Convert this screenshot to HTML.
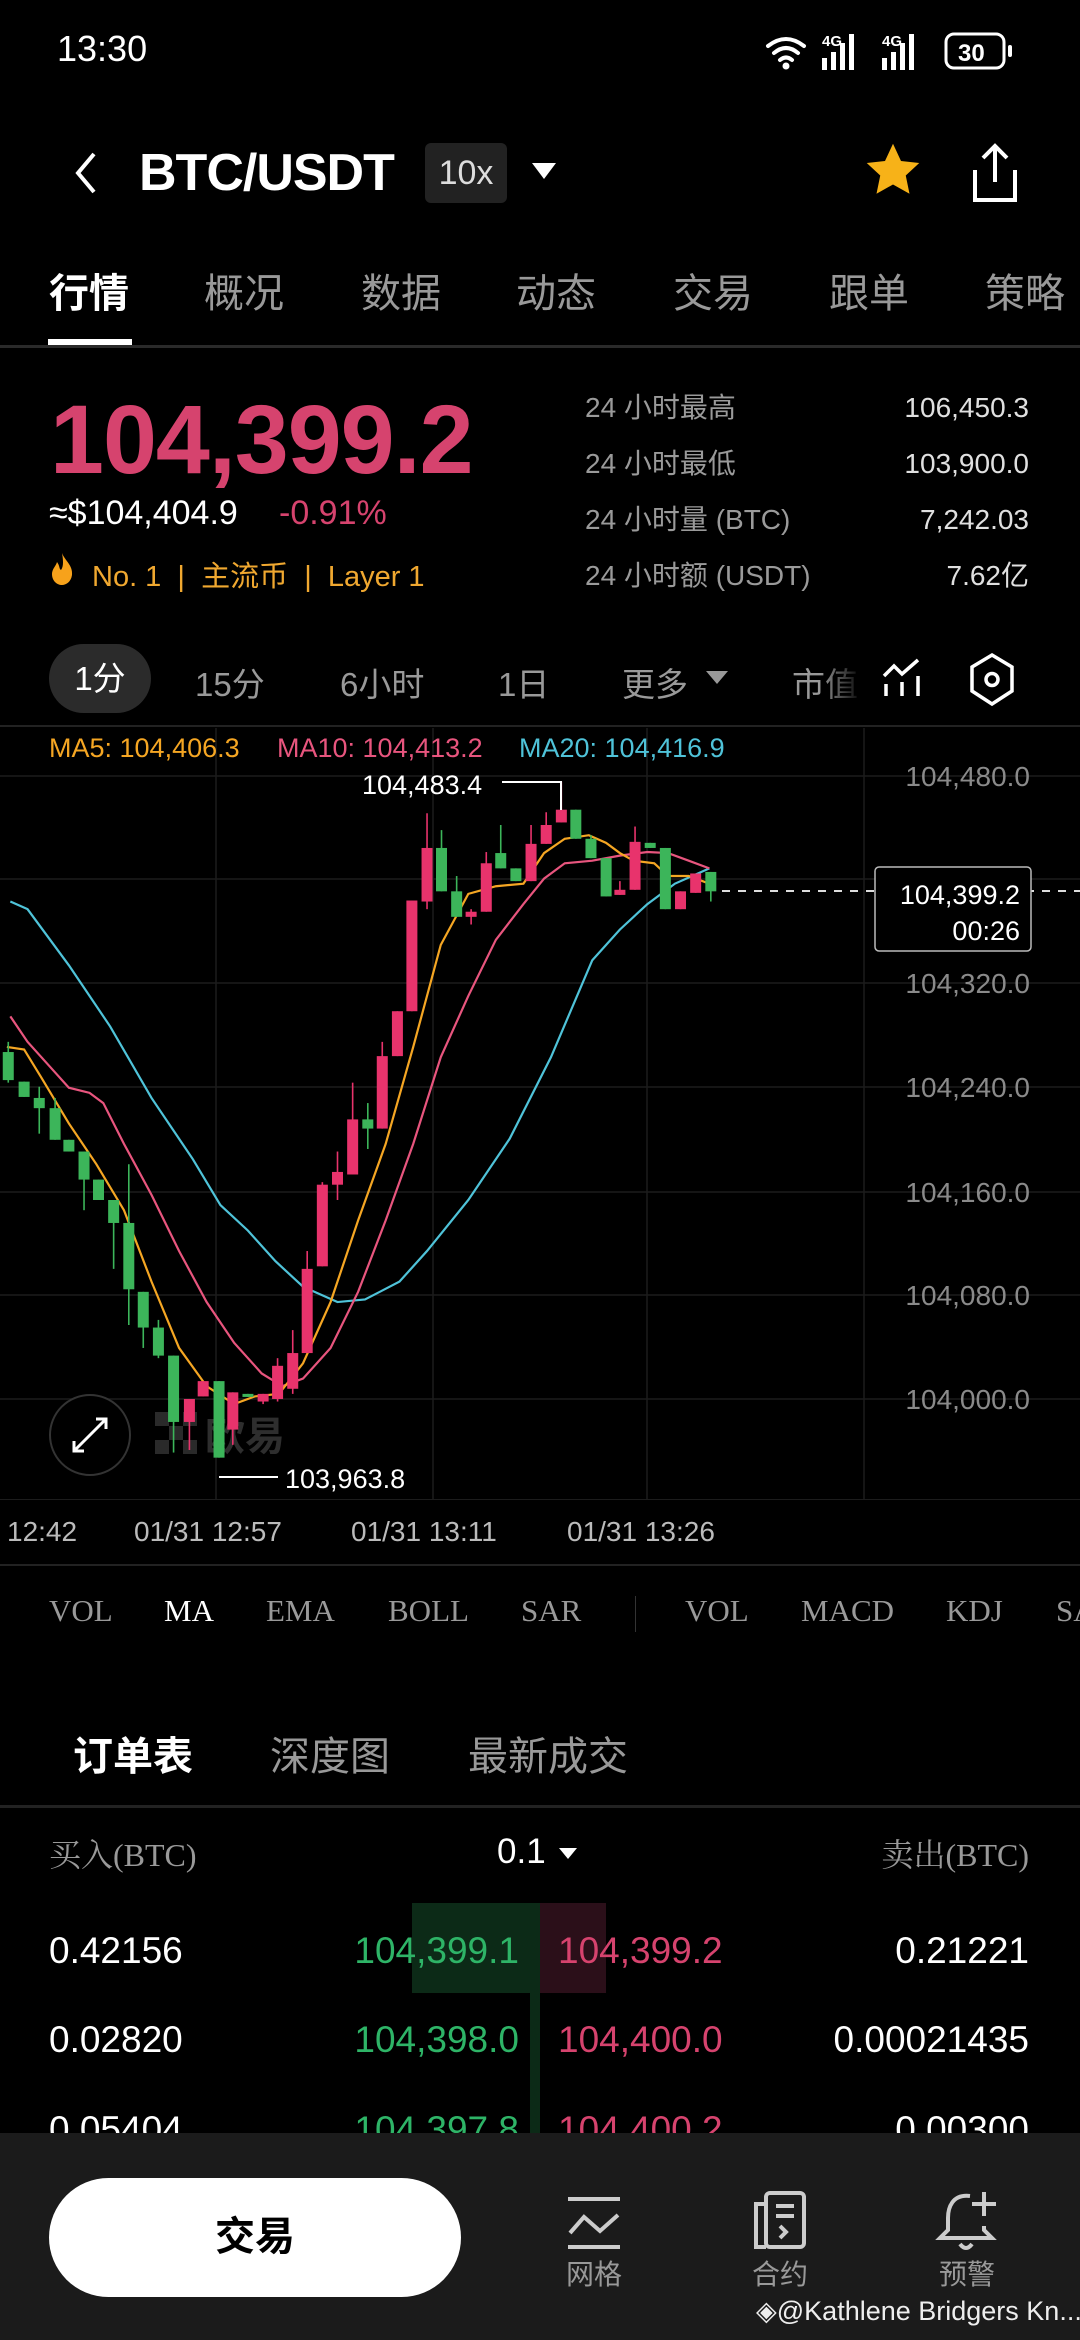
<!DOCTYPE html>
<html><head><meta charset="utf-8">
<style>
*{margin:0;padding:0;box-sizing:border-box}
body{width:1080px;height:2340px;background:#000;color:#fff;font-family:"Liberation Sans","Noto Sans CJK SC",sans-serif;position:relative;overflow:hidden}
.a{position:absolute;white-space:nowrap}
.serif{font-family:"Liberation Serif","Noto Serif CJK SC",serif}
</style></head><body>

<!-- status bar -->
<div class="a" style="left:57px;top:28px;font-size:36px;color:#fff">13:30</div>
<svg class="a" style="left:760px;top:30px" width="270" height="44" viewBox="0 0 270 44">
 <g fill="none" stroke="#fff" stroke-width="4" stroke-linecap="round">
  <path d="M8 16 Q26 2 44 16"/><path d="M14 23 Q26 13 38 23"/><path d="M20 30 Q26 25 32 30"/>
 </g>
 <circle cx="26" cy="36" r="3.5" fill="#fff"/>
 <text x="62" y="16" font-size="15" font-weight="bold" fill="#fff" font-family="Liberation Sans">4G</text>
 <g fill="#fff"><rect x="62" y="28" width="5" height="12"/><rect x="71" y="22" width="5" height="18"/><rect x="80" y="13" width="5" height="27"/><rect x="89" y="4" width="5" height="36"/></g>
 <text x="122" y="16" font-size="15" font-weight="bold" fill="#fff" font-family="Liberation Sans">4G</text>
 <g fill="#fff"><rect x="122" y="28" width="5" height="12"/><rect x="131" y="22" width="5" height="18"/><rect x="140" y="13" width="5" height="27"/><rect x="149" y="4" width="5" height="36"/></g>
 <rect x="186" y="4" width="58" height="34" rx="8" fill="none" stroke="#fff" stroke-width="3"/>
 <rect x="248" y="15" width="4" height="12" rx="2" fill="#fff"/>
 <text x="198" y="31" font-size="24" font-weight="bold" fill="#fff" font-family="Liberation Sans">30</text>
</svg>

<!-- header -->
<svg class="a" style="left:70px;top:150px" width="30" height="46"><path d="M24 4 L8 23 L24 42" fill="none" stroke="#fff" stroke-width="4"/></svg>
<div class="a" style="left:139px;top:143px;font-size:52px;font-weight:bold;letter-spacing:-1px">BTC/USDT</div>
<div class="a" style="left:425px;top:143px;width:82px;height:60px;background:#222;border-radius:6px;font-size:34px;color:#ddd;text-align:center;line-height:60px">10x</div>
<svg class="a" style="left:532px;top:163px" width="24" height="18"><path d="M0 0 L24 0 L12 16Z" fill="#fff"/></svg>
<svg class="a" style="left:862px;top:140px" width="62" height="60" viewBox="0 0 24 24"><path d="M12 1.5l3.2 6.9 7.3.8-5.4 5 1.5 7.3L12 17.8 5.4 21.5l1.5-7.3-5.4-5 7.3-.8z" fill="#f7b218"/></svg>
<svg class="a" style="left:965px;top:142px" width="60" height="62" viewBox="0 0 60 62"><g fill="none" stroke="#fff" stroke-width="4"><path d="M30 4 V40"/><path d="M18 16 L30 4 L42 16"/><path d="M10 28 V58 H50 V28"/></g></svg>

<!-- tabs -->
<div class="a" style="left:49px;top:261px;font-size:40px;color:#fff;font-weight:bold">行情</div>
<div class="a" style="left:204px;top:261px;font-size:40px;color:#999">概况</div>
<div class="a" style="left:361px;top:261px;font-size:40px;color:#999">数据</div>
<div class="a" style="left:516px;top:261px;font-size:40px;color:#999">动态</div>
<div class="a" style="left:673px;top:261px;font-size:40px;color:#999">交易</div>
<div class="a" style="left:829px;top:261px;font-size:40px;color:#999">跟单</div>
<div class="a" style="left:985px;top:261px;font-size:40px;color:#999">策略</div>
<div class="a" style="left:48px;top:339px;width:84px;height:6px;background:#fff"></div>
<div class="a" style="left:0;top:345px;width:1080px;height:3px;background:#2a2a2a"></div>

<!-- price -->
<div class="a" style="left:50px;top:384px;font-size:97px;font-weight:bold;color:#d6436e;letter-spacing:-1px">104,399.2</div>
<div class="a" style="left:49px;top:494px;font-size:34px;color:#fff">≈$104,404.9</div>
<div class="a" style="left:279px;top:494px;font-size:34px;color:#d6436e">-0.91%</div>
<svg class="a" style="left:51px;top:553px" width="22" height="32" viewBox="0 0 22 32"><path d="M11 0 C14 8 22 12 21 22 C20 29 15 32 11 32 C6 32 1 28 1 21 C1 16 5 13 6 9 C9 13 8 16 10 17 C13 13 12 6 11 0Z" fill="#f7a21b"/></svg>
<div class="a" style="left:92px;top:553px;font-size:29px;color:#f0a830">No. 1 &nbsp;|&nbsp; 主流币 &nbsp;|&nbsp; Layer 1</div>

<div class="a" style="left:585px;top:380px;font-size:28px;color:#9a9a9a;line-height:56px">24 小时最高<br>24 小时最低<br>24 小时量 (BTC)<br>24 小时额 (USDT)</div>
<div class="a" style="right:51px;top:380px;font-size:28px;color:#e0e0e0;line-height:56px;text-align:right">106,450.3<br>103,900.0<br>7,242.03<br>7.62亿</div>

<!-- interval row -->
<div class="a" style="left:49px;top:644px;width:102px;height:69px;background:#2b2b2b;border-radius:35px;font-size:33px;line-height:69px;text-align:center;color:#fff">1分</div>
<div class="a" style="left:195px;top:658px;font-size:33px;color:#999">15分</div>
<div class="a" style="left:340px;top:658px;font-size:33px;color:#999">6小时</div>
<div class="a" style="left:498px;top:658px;font-size:33px;color:#999">1日</div>
<div class="a" style="left:622px;top:658px;font-size:33px;color:#999">更多</div>
<svg class="a" style="left:706px;top:671px" width="22" height="14"><path d="M0 0H22L11 13Z" fill="#999"/></svg>
<div class="a" style="left:792px;top:658px;font-size:33px;color:#999">市值</div>
<div class="a" style="left:820px;top:640px;width:60px;height:80px;background:linear-gradient(90deg,rgba(0,0,0,0),#000 70%)"></div>
<svg class="a" style="left:880px;top:654px" width="50" height="50" viewBox="0 0 50 50"><g fill="none" stroke="#fff" stroke-width="3.5"><path d="M4 22 L14 12 L22 20 L38 6"/><path d="M6 30V42M22 28V42M38 22V42"/></g></svg>
<svg class="a" style="left:966px;top:652px" width="52" height="56" viewBox="0 0 52 56"><path d="M26 3 L46 15 V39 L26 52 L6 39 V15Z" fill="none" stroke="#fff" stroke-width="3.5"/><circle cx="26" cy="27.5" r="6" fill="none" stroke="#fff" stroke-width="3.5"/></svg>
<div class="a" style="left:0;top:725px;width:1080px;height:2px;background:#222"></div>

<!-- chart -->
<svg class="a" style="left:0;top:700px" width="1080" height="800" viewBox="0 0 1080 800">
 <g stroke="#1c1c1c" stroke-width="1.5">
  <line x1="0" y1="76" x2="1080" y2="76"/><line x1="0" y1="179" x2="1080" y2="179"/><line x1="0" y1="283" x2="1080" y2="283"/>
  <line x1="0" y1="387" x2="1080" y2="387"/><line x1="0" y1="492" x2="1080" y2="492"/><line x1="0" y1="595" x2="1080" y2="595"/><line x1="0" y1="699" x2="1080" y2="699"/>
  <line x1="216" y1="28" x2="216" y2="800"/><line x1="433" y1="28" x2="433" y2="800"/><line x1="647" y1="28" x2="647" y2="800"/><line x1="864" y1="28" x2="864" y2="800"/>
 </g>
 <g font-size="28" fill="#8a8a8a" font-family="Liberation Sans" text-anchor="end">
  <text x="1030" y="86">104,480.0</text><text x="1030" y="189" fill="#333">104,400.0</text><text x="1030" y="293">104,320.0</text>
  <text x="1030" y="397">104,240.0</text><text x="1030" y="502">104,160.0</text><text x="1030" y="605">104,080.0</text><text x="1030" y="709">104,000.0</text>
 </g>
 <g font-size="27" font-family="Liberation Sans">
  <text x="49" y="57" fill="#f5a623">MA5: 104,406.3</text>
  <text x="277" y="57" fill="#e8557e">MA10: 104,413.2</text>
  <text x="519" y="57" fill="#4fc3d9">MA20: 104,416.9</text>
 </g>
 <g fill="#2a2a2a"><rect x="155" y="712" width="14" height="14"/><rect x="183" y="712" width="14" height="14"/><rect x="169" y="726" width="14" height="14"/><rect x="155" y="740" width="14" height="14"/><rect x="183" y="740" width="14" height="14"/></g>
 <text x="205" y="750" font-size="40" fill="#2e2e2e" font-weight="bold" font-family="Noto Sans CJK SC">欧易</text>
 <circle cx="90" cy="735" r="40" fill="#000" stroke="#333" stroke-width="2"/>
 <g fill="none" stroke="#fff" stroke-width="3"><path d="M74 751 L106 719 M96 719H106V729 M74 741V751H84"/></g>

 <g transform="scale(0.68871,0.5102)" fill="none" stroke-width="2.2">
  <polyline vector-effect="non-scaling-stroke" stroke="#4fc3d9" points="15,395 40,410 100,520 160,640 220,780 280,900 320,990 360,1040 400,1100 440,1150 490,1180 530,1175 580,1140 620,1080 680,980 740,860 800,700 860,510 900,450 940,400 980,360 1030,330"/>
  <polyline vector-effect="non-scaling-stroke" stroke="#e8557e" points="15,620 40,670 80,730 100,760 130,770 150,790 180,870 220,970 260,1080 300,1180 340,1260 380,1320 410,1345 440,1330 480,1270 520,1160 560,1020 600,870 640,700 680,580 720,470 760,400 790,350 820,320 860,315 900,305 940,298 970,300 1000,315 1030,330"/>
  <polyline vector-effect="non-scaling-stroke" stroke="#f5a623" points="10,680 35,685 60,740 100,830 140,910 180,1000 220,1140 260,1270 300,1345 340,1380 370,1365 405,1360 440,1300 480,1180 520,1020 560,870 600,680 640,480 680,380 720,365 760,360 790,300 820,272 855,265 880,280 900,300 920,315 950,320 970,345 1000,345 1030,360"/>
 </g>
 <g id="candles"></g>
 <text x="362" y="94" font-size="27" fill="#fff" font-family="Liberation Sans">104,483.4</text>
 <path d="M502 82 H561 V110" stroke="#fff" stroke-width="2" fill="none"/>
 <path d="M219 777 H278" stroke="#fff" stroke-width="2"/>
 <text x="285" y="788" font-size="27" fill="#fff" font-family="Liberation Sans">103,963.8</text>
 <line x1="722" y1="191" x2="1080" y2="191" stroke="#ddd" stroke-width="2" stroke-dasharray="8,8"/>
 <rect x="875" y="167" width="156" height="84" rx="4" fill="#000" stroke="#bbb" stroke-width="1.5"/>
 <text x="1020" y="204" font-size="27" fill="#fff" text-anchor="end" font-family="Liberation Sans">104,399.2</text>
 <text x="1020" y="240" font-size="27" fill="#fff" text-anchor="end" font-family="Liberation Sans">00:26</text>
</svg>

<div class="a" style="left:0;top:1499px;width:1080px;height:1px;background:#1c1c1c"></div>
<div class="a" style="left:7px;top:1516px;font-size:28px;color:#bbb">12:42</div>
<div class="a" style="left:134px;top:1516px;font-size:28px;color:#bbb">01/31 12:57</div>
<div class="a" style="left:351px;top:1516px;font-size:28px;color:#bbb">01/31 13:11</div>
<div class="a" style="left:567px;top:1516px;font-size:28px;color:#bbb">01/31 13:26</div>
<div class="a" style="left:0;top:1564px;width:1080px;height:2px;background:#222"></div>

<!-- indicators -->
<div class="a serif" style="left:49px;top:1593px;font-size:31px;color:#999">VOL</div>
<div class="a serif" style="left:164px;top:1593px;font-size:31px;color:#fff">MA</div>
<div class="a serif" style="left:266px;top:1593px;font-size:31px;color:#999">EMA</div>
<div class="a serif" style="left:388px;top:1593px;font-size:31px;color:#999">BOLL</div>
<div class="a serif" style="left:521px;top:1593px;font-size:31px;color:#999">SAR</div>
<div class="a" style="left:635px;top:1596px;width:1px;height:36px;background:#333"></div>
<div class="a serif" style="left:685px;top:1593px;font-size:31px;color:#999">VOL</div>
<div class="a serif" style="left:801px;top:1593px;font-size:31px;color:#999">MACD</div>
<div class="a serif" style="left:946px;top:1593px;font-size:31px;color:#999">KDJ</div>
<div class="a serif" style="left:1056px;top:1593px;font-size:31px;color:#999">SAR</div>

<!-- order book tabs -->
<div class="a" style="left:73px;top:1724px;font-size:40px;color:#fff;font-weight:bold">订单表</div>
<div class="a" style="left:270px;top:1724px;font-size:40px;color:#999">深度图</div>
<div class="a" style="left:468px;top:1724px;font-size:40px;color:#999">最新成交</div>
<div class="a" style="left:0;top:1805px;width:1080px;height:3px;background:#222"></div>

<div class="a serif" style="left:49px;top:1830px;font-size:32px;color:#999">买入(BTC)</div>
<div class="a" style="left:497px;top:1832px;font-size:35px;color:#fff">0.1</div>
<svg class="a" style="left:559px;top:1848px" width="18" height="12"><path d="M0 0H18L9 11Z" fill="#fff"/></svg>
<div class="a serif" style="right:51px;top:1830px;font-size:32px;color:#999">卖出(BTC)</div>

<div class="a" style="left:412px;top:1903px;width:128px;height:90px;background:#0c2a17"></div>
<div class="a" style="left:540px;top:1903px;width:66px;height:90px;background:#2b0f19"></div>
<div class="a" style="left:530px;top:1993px;width:10px;height:140px;background:#0c2a17"></div>

<div class="a" style="left:49px;top:1930px;font-size:37px;color:#fff">0.42156</div>
<div class="a" style="right:561px;top:1930px;font-size:37px;color:#2eb467">104,399.1</div>
<div class="a" style="left:558px;top:1930px;font-size:37px;color:#d6436e">104,399.2</div>
<div class="a" style="right:51px;top:1930px;font-size:37px;color:#fff">0.21221</div>
<div class="a" style="left:49px;top:2019px;font-size:37px;color:#fff">0.02820</div>
<div class="a" style="right:561px;top:2019px;font-size:37px;color:#2eb467">104,398.0</div>
<div class="a" style="left:558px;top:2019px;font-size:37px;color:#d6436e">104,400.0</div>
<div class="a" style="right:51px;top:2019px;font-size:37px;color:#fff">0.00021435</div>
<div class="a" style="left:49px;top:2109px;font-size:37px;color:#fff">0.05404</div>
<div class="a" style="right:561px;top:2109px;font-size:37px;color:#2eb467">104,397.8</div>
<div class="a" style="left:558px;top:2109px;font-size:37px;color:#d6436e">104,400.2</div>
<div class="a" style="right:51px;top:2109px;font-size:37px;color:#fff">0.00300</div>

<!-- bottom bar -->
<div class="a" style="left:0;top:2133px;width:1080px;height:207px;background:#1b1b1b"></div>
<div class="a" style="left:49px;top:2178px;width:412px;height:119px;background:#fff;border-radius:60px;color:#000;font-size:40px;font-weight:bold;text-align:center;line-height:119px">交易</div>
<svg class="a" style="left:566px;top:2195px" width="56" height="56" viewBox="0 0 56 56"><g fill="none" stroke="#ccc" stroke-width="4"><path d="M2 4H54M2 52H54"/><path d="M4 38 L18 22 L34 36 L52 20"/></g></svg>
<div class="a" style="left:566px;top:2253px;font-size:28px;color:#999">网格</div>
<svg class="a" style="left:752px;top:2190px" width="56" height="62" viewBox="0 0 56 62"><g fill="none" stroke="#ccc" stroke-width="4"><rect x="14" y="3" width="38" height="54" rx="4"/><path d="M14 14H4V57H14"/><path d="M24 16H42M24 26H42M28 36L34 42L28 48"/></g></svg>
<div class="a" style="left:752px;top:2253px;font-size:28px;color:#999">合约</div>
<svg class="a" style="left:934px;top:2188px" width="66" height="66" viewBox="0 0 66 66"><g fill="none" stroke="#ccc" stroke-width="4"><path d="M36 8 C18 6 14 20 14 30 V42 L6 50 H58 L50 42 V38"/><path d="M26 56 Q32 64 38 56"/><path d="M50 4V28M38 16H62"/></g></svg>
<div class="a" style="left:939px;top:2253px;font-size:28px;color:#999">预警</div>
<div class="a" style="left:756px;top:2296px;font-size:27px;color:#eee">◈@Kathlene Bridgers Kn...</div>

<script>
var d=[[12,'g',690,745,670,750],[35,'g',748,778],[57,'g',780,800,758,850],[80,'g',800,862,780,862],[100,'g',862,885],[122,'g',885,940,885,1000],[143,'g',940,980],[165,'g',980,1025,980,1115],[187,'g',1025,1155,910,1225],[208,'g',1160,1230,1160,1270],[230,'g',1230,1285,1215,1290],[252,'g',1285,1415,1285,1475],[275,'r',1370,1415,1370,1470],[295,'r',1335,1365],[318,'g',1335,1485],[338,'r',1357,1430,1357,1460],[360,'g',1360,1366],[382,'r',1360,1375,1360,1380],[403,'r',1305,1370,1290,1375],[425,'r',1280,1350,1235,1360],[446,'r',1115,1280,1080,1280],[468,'r',950,1110,945,1110],[490,'r',925,950,885,980],[512,'r',822,930,750,930],[534,'g',822,840,790,880],[555,'r',698,840,670,840],[577,'r',610,698],[598,'r',393,610],[620,'r',290,395,222,410],[641,'g',290,375,255,375],[663,'g',375,425,345,425],[684,'r',415,425,410,440],[706,'r',320,415,298,415],[727,'g',300,330,245,330],[749,'g',330,355],[771,'r',282,355,245,355],[793,'r',245,282,220,282],[815,'r',215,240,160,240],[836,'g',215,272],[858,'g',272,310,265,310],[880,'g',310,385],[900,'r',372,382,355,382],[922,'r',278,372,248,372],[944,'g',280,290],[966,'g',290,410],[988,'r',375,410],[1010,'r',340,378],[1032,'g',337,375,337,395]];
var sx=1080/1568,sy=800/1568,s='';
d.forEach(function(c){var x=c[0]*sx,col=c[1]=='g'?'#3cb55a':'#e8336c';var t=c[2]*sy,b=c[3]*sy;var wt=(c[4]||c[2])*sy,wb=(c[5]||c[3])*sy;
s+='<line x1="'+x+'" x2="'+x+'" y1="'+wt+'" y2="'+wb+'" stroke="'+col+'" stroke-width="1.6"/>';
s+='<rect x="'+(x-5.5)+'" y="'+t+'" width="11" height="'+Math.max(b-t,2)+'" fill="'+col+'"/>';});
document.getElementById('candles').innerHTML=s;
</script>
</body></html>
